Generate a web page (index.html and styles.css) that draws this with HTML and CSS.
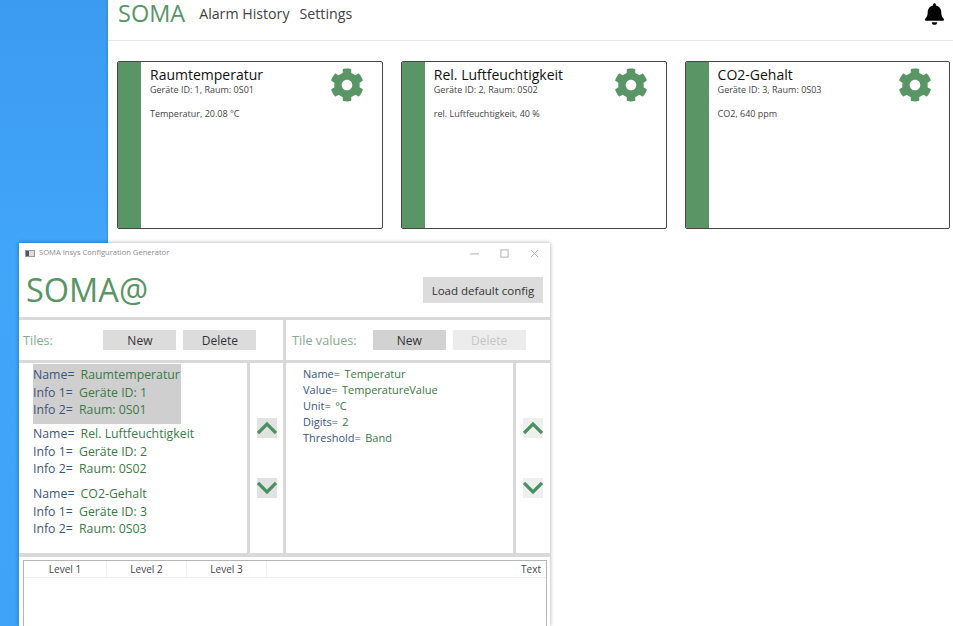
FILE: index.html
```html
<!DOCTYPE html>
<html lang="de">
<head>
<meta charset="utf-8">
<title>SOMA</title>
<link rel="stylesheet" href="styles.css">
</head>
<body>
<svg class="defs" width="0" height="0" aria-hidden="true">
  <symbol id="cog" viewBox="0 0 512 512"><path d="M487.4 315.7l-42.6-24.6c4.3-23.2 4.3-47 0-70.2l42.6-24.6c4.9-2.8 7.1-8.6 5.5-14-11.1-35.6-30-67.8-54.7-94.6-3.8-4.1-10-5.1-14.8-2.3L380.8 110c-17.9-15.4-38.5-27.3-60.8-35.1V25.8c0-5.6-3.9-10.5-9.4-11.7-36.7-8.2-74.3-7.8-109.2 0-5.5 1.2-9.4 6.1-9.4 11.7V75c-22.2 7.9-42.8 19.8-60.8 35.1L88.7 85.5c-4.9-2.8-11-1.9-14.8 2.3-24.7 26.7-43.6 58.9-54.7 94.6-1.7 5.4.6 11.2 5.5 14L67.3 221c-4.3 23.2-4.3 47 0 70.2l-42.6 24.6c-4.9 2.8-7.1 8.6-5.5 14 11.1 35.6 30 67.8 54.7 94.6 3.8 4.1 10 5.1 14.8 2.3l42.6-24.6c17.9 15.4 38.5 27.3 60.8 35.1v49.2c0 5.6 3.9 10.5 9.4 11.7 36.7 8.2 74.3 7.8 109.2 0 5.5-1.2 9.4-6.1 9.4-11.7v-49.2c22.2-7.9 42.8-19.8 60.8-35.1l42.6 24.6c4.9 2.8 11 1.9 14.8-2.3 24.7-26.7 43.6-58.9 54.7-94.6 1.5-5.5-.7-11.3-5.6-14.1zM256 336c-44.1 0-80-35.9-80-80s35.9-80 80-80 80 35.9 80 80-35.9 80-80 80z"/></symbol>
  <symbol id="up" viewBox="0 0 20 20"><path d="M1 15 L10 6 L19 15" fill="none" stroke-width="3.2"/></symbol>
  <symbol id="down" viewBox="0 0 20 20"><path d="M1 5 L10 14 L19 5" fill="none" stroke-width="3.2"/></symbol>
</svg>

<div class="desktop">
  <div class="wallpaper"></div>
  <main class="browser">
    <nav class="navbar">
      <span class="brand">SOMA</span>
      <a class="nav-link">Alarm History</a>
      <a class="nav-link">Settings</a>
      <svg class="bell" viewBox="0 0 448 512"><path d="M224 512c35.32 0 63.97-28.65 63.97-64H160.03c0 35.35 28.65 64 63.97 64zm215.39-149.71c-19.32-20.76-55.47-51.99-55.47-154.29 0-77.7-54.48-139.9-127.94-155.16V32c0-17.67-14.32-32-31.98-32s-31.98 14.33-31.98 32v20.84C118.56 68.1 64.08 130.3 64.08 208c0 102.3-36.15 133.53-55.47 154.29-6 6.45-8.66 14.16-8.61 21.71.11 16.4 12.98 32 32.1 32h383.8c19.12 0 32-15.6 32.1-32 .05-7.55-2.61-15.27-8.61-21.71z"/></svg>
    </nav>
    <section class="cards">
      <article class="card">
        <div class="card-bar"></div>
        <div class="card-body">
          <h2 class="card-title">Raumtemperatur</h2>
          <p class="card-sub">Geräte ID: 1, Raum: 0S01</p>
          <p class="card-value">Temperatur, 20.08 °C</p>
        </div>
        <svg class="gear"><use href="#cog"/></svg>
      </article>
      <article class="card">
        <div class="card-bar"></div>
        <div class="card-body">
          <h2 class="card-title">Rel. Luftfeuchtigkeit</h2>
          <p class="card-sub">Geräte ID: 2, Raum: 0S02</p>
          <p class="card-value">rel. Luftfeuchtigkeit, 40 %</p>
        </div>
        <svg class="gear"><use href="#cog"/></svg>
      </article>
      <article class="card">
        <div class="card-bar"></div>
        <div class="card-body">
          <h2 class="card-title">CO2-Gehalt</h2>
          <p class="card-sub">Geräte ID: 3, Raum: 0S03</p>
          <p class="card-value">CO2, 640 ppm</p>
        </div>
        <svg class="gear"><use href="#cog"/></svg>
      </article>
    </section>
  </main>

  <div class="window">
    <header class="titlebar">
      <span class="app-icon"></span>
      <span class="title-text">SOMA Insys Configuration Generator</span>
      <span class="win-controls">
        <svg class="win-btn" viewBox="0 0 10 10"><path d="M0 5.5H10"/></svg>
        <svg class="win-btn" viewBox="0 0 10 10"><rect x="1" y="1" width="8" height="8"/></svg>
        <svg class="win-btn" viewBox="0 0 10 10"><path d="M1 1L9 9M9 1L1 9"/></svg>
      </span>
    </header>
    <div class="head">
      <span class="logo">SOMA@</span>
      <button class="btn btn-load">Load default config</button>
    </div>
    <div class="toolbars">
      <div class="toolbar">
        <span class="tool-label">Tiles:</span>
        <div class="tool-btns tool-btns-left">
          <button class="btn btn-tool">New</button>
          <button class="btn btn-tool">Delete</button>
        </div>
      </div>
      <div class="toolbar">
        <span class="tool-label">Tile values:</span>
        <div class="tool-btns">
          <button class="btn btn-tool btn-dark">New</button>
          <button class="btn btn-tool btn-off">Delete</button>
        </div>
      </div>
    </div>
    <div class="lists">
      <div class="list list-tiles">
        <div class="tile tile-selected">
          <div class="kv"><span class="k">Name= </span><span class="v">Raumtemperatur</span></div>
          <div class="kv"><span class="k">Info 1= </span><span class="v">Geräte ID: 1</span></div>
          <div class="kv"><span class="k">Info 2= </span><span class="v">Raum: 0S01</span></div>
        </div>
        <div class="tile">
          <div class="kv"><span class="k">Name= </span><span class="v">Rel. Luftfeuchtigkeit</span></div>
          <div class="kv"><span class="k">Info 1= </span><span class="v">Geräte ID: 2</span></div>
          <div class="kv"><span class="k">Info 2= </span><span class="v">Raum: 0S02</span></div>
        </div>
        <div class="tile">
          <div class="kv"><span class="k">Name= </span><span class="v">CO2-Gehalt</span></div>
          <div class="kv"><span class="k">Info 1= </span><span class="v">Geräte ID: 3</span></div>
          <div class="kv"><span class="k">Info 2= </span><span class="v">Raum: 0S03</span></div>
        </div>
      </div>
      <div class="arrows">
        <span class="arrow"><svg><use href="#up"/></svg></span>
        <span class="arrow"><svg><use href="#down"/></svg></span>
      </div>
      <div class="list list-values">
        <div class="kv-sm"><span class="k">Name= </span><span class="v">Temperatur</span></div>
        <div class="kv-sm"><span class="k">Value= </span><span class="v">TemperatureValue</span></div>
        <div class="kv-sm"><span class="k">Unit= </span><span class="v">°C</span></div>
        <div class="kv-sm"><span class="k">Digits= </span><span class="v">2</span></div>
        <div class="kv-sm"><span class="k">Threshold= </span><span class="v">Band</span></div>
      </div>
      <div class="arrows arrows-light">
        <span class="arrow"><svg><use href="#up"/></svg></span>
        <span class="arrow"><svg><use href="#down"/></svg></span>
      </div>
    </div>
    <div class="table">
      <div class="thead">
        <span class="th th-first">Level 1</span>
        <span class="th">Level 2</span>
        <span class="th">Level 3</span>
        <span class="th th-text">Text</span>
      </div>
    </div>
  </div>
</div>
</body>
</html>
```

FILE: styles.css
```css
* { box-sizing: border-box; }
html, body { margin: 0; padding: 0; height: 100%; overflow: hidden; }
body { font-family: "Open Sans", "Noto Sans", "Liberation Sans", sans-serif; background: #fff; }
.defs { position: absolute; }

.desktop { position: relative; display: flex; width: 953px; height: 626px; overflow: hidden; }
.wallpaper { width: 108px; flex: none; background: linear-gradient(180deg, #3b9bf0 0%, #41a5f8 40%, #3fa3f6 100%); }
.browser { flex: 1; background: #fff; box-shadow: -1px 0 2px rgba(0,0,0,.12); }

.navbar { display: flex; align-items: center; height: 41px; padding: 0 9px 13px 10px; border-bottom: 1px solid #e6e6e6; }
.brand { font-size: 23.5px; line-height: 27px; font-weight: 500; color: #5a9566; margin-right: 14px; }
.nav-link { font-size: 14.2px; line-height: 27px; font-weight: 500; color: #3f4245; margin-right: 10px; }
.bell { width: 19px; height: 22px; margin-left: auto; fill: #000; }

.cards { display: flex; gap: 18px; padding: 20px 0 0 9px; }
.card { display: flex; position: relative; width: 265.8px; height: 168px; border: 1px solid #444; border-radius: 2px; overflow: hidden; background: #fff; }
.card-bar { width: 23px; flex: none; background: #5a9566; }
.card-body { padding: 4px 0 0 9px; color: #444; }
.card-title { margin: 0; font-size: 14px; line-height: 18px; font-weight: 500; color: #111; }
.card-sub { margin: 0; font-size: 9px; line-height: 12px; }
.card-value { margin: 12px 0 0; font-size: 9px; line-height: 12px; }
.gear { position: absolute; top: 6px; right: 17.5px; width: 34px; height: 34px; fill: #5a9566; }

.window { position: absolute; left: 19px; top: 243px; width: 531px; height: 383px; background: #fff; box-shadow: 0 0 4px rgba(0,0,0,.35); display: flex; flex-direction: column; }
.titlebar { display: flex; align-items: center; height: 20px; padding: 0 11px 0 6px; flex: none; }
.app-icon { width: 10px; height: 7px; background: linear-gradient(90deg, #555 0 40%, #ddd 40% 100%); border: 1px solid #999; margin-right: 4px; }
.title-text { font-size: 7.6px; line-height: 18px; position: relative; top: -1px; color: #8b8b8b; }
.win-controls { display: flex; gap: 21px; margin-left: auto; }
.win-btn { width: 9px; height: 9px; fill: none; stroke: #aaa; stroke-width: 1; }

.head { display: flex; align-items: center; justify-content: space-between; height: 57px; flex: none; padding: 0 7px 0 7px; border-bottom: 3px solid #d9d9d9; }
.logo { font-size: 32.5px; line-height: 44px; color: #5a9566; }
.btn { border: 0; padding: 0; font-family: inherit; color: #333; background: #dcdcdc; }
.btn-load { width: 120px; height: 26px; font-size: 11.5px; }

.toolbars { display: flex; height: 43px; flex: none; border-bottom: 3px solid #d9d9d9; }
.toolbar { display: flex; align-items: center; }
.toolbar:first-child { width: 267px; border-right: 3px solid #d9d9d9; padding-left: 4px; }
.toolbar:last-child { flex: 1; padding-left: 6px; }
.tool-label { font-size: 12.7px; color: #86a98f; }
.tool-btns { display: flex; gap: 7px; margin-left: 16px; }
.tool-btns-left { margin-left: 50.5px; }
.btn-tool { width: 73px; height: 20px; font-size: 12px; }
.btn-dark { background: #d2d2d2; }
.btn-off { background: #ececec; color: #c6c6c6; }

.lists { display: flex; height: 194px; flex: none; border-bottom: 4px solid #d9d9d9; }
.list { height: 100%; flex: none; }
.list-tiles { width: 231px; padding: 1px 0 0 14px; border-right: 3px solid #d9d9d9; }
.list-values { width: 233px; padding: 3px 0 0 17px; border-left: 3px solid #d9d9d9; border-right: 3px solid #d9d9d9; }
.tile { width: 148px; padding-bottom: 7.5px; }
.tile-selected { background: #cfcfcf; padding: 2px 0 5.5px; margin-bottom: 1px; }
.kv { font-size: 12.3px; line-height: 17.5px; white-space: nowrap; }
.kv-sm { font-size: 11px; line-height: 16px; white-space: nowrap; }
.k { color: #3a5580; }
.kv .k { margin-right: 3px; }
.kv-sm .k { margin-right: 1.5px; }
.v { color: #3b7a45; }

.arrows { width: 33px; flex: none; display: flex; flex-direction: column; align-items: center; gap: 40px; padding-top: 55px; }
.arrows-light { width: 34px; }
.arrow { width: 20px; height: 20px; background: #e2e2e2; display: block; }
.arrows-light .arrow { background: #eef0f0; }
.arrow svg { width: 20px; height: 20px; display: block; stroke: #4a9060; }

.table { flex: 1; margin: 3px 3px 0 4px; border: 1px solid #b5b5b5; border-bottom: 0; }
.thead { display: flex; height: 17px; border-bottom: 1px solid #ededed; }
.th { width: 80px; font-size: 10px; line-height: 16px; text-align: center; color: #444; border-right: 1px solid #f0f0f0; }
.th-first { width: 83px; }
.th-text { width: auto; flex: 1; text-align: right; padding-right: 5px; border-right: 0; }
```
